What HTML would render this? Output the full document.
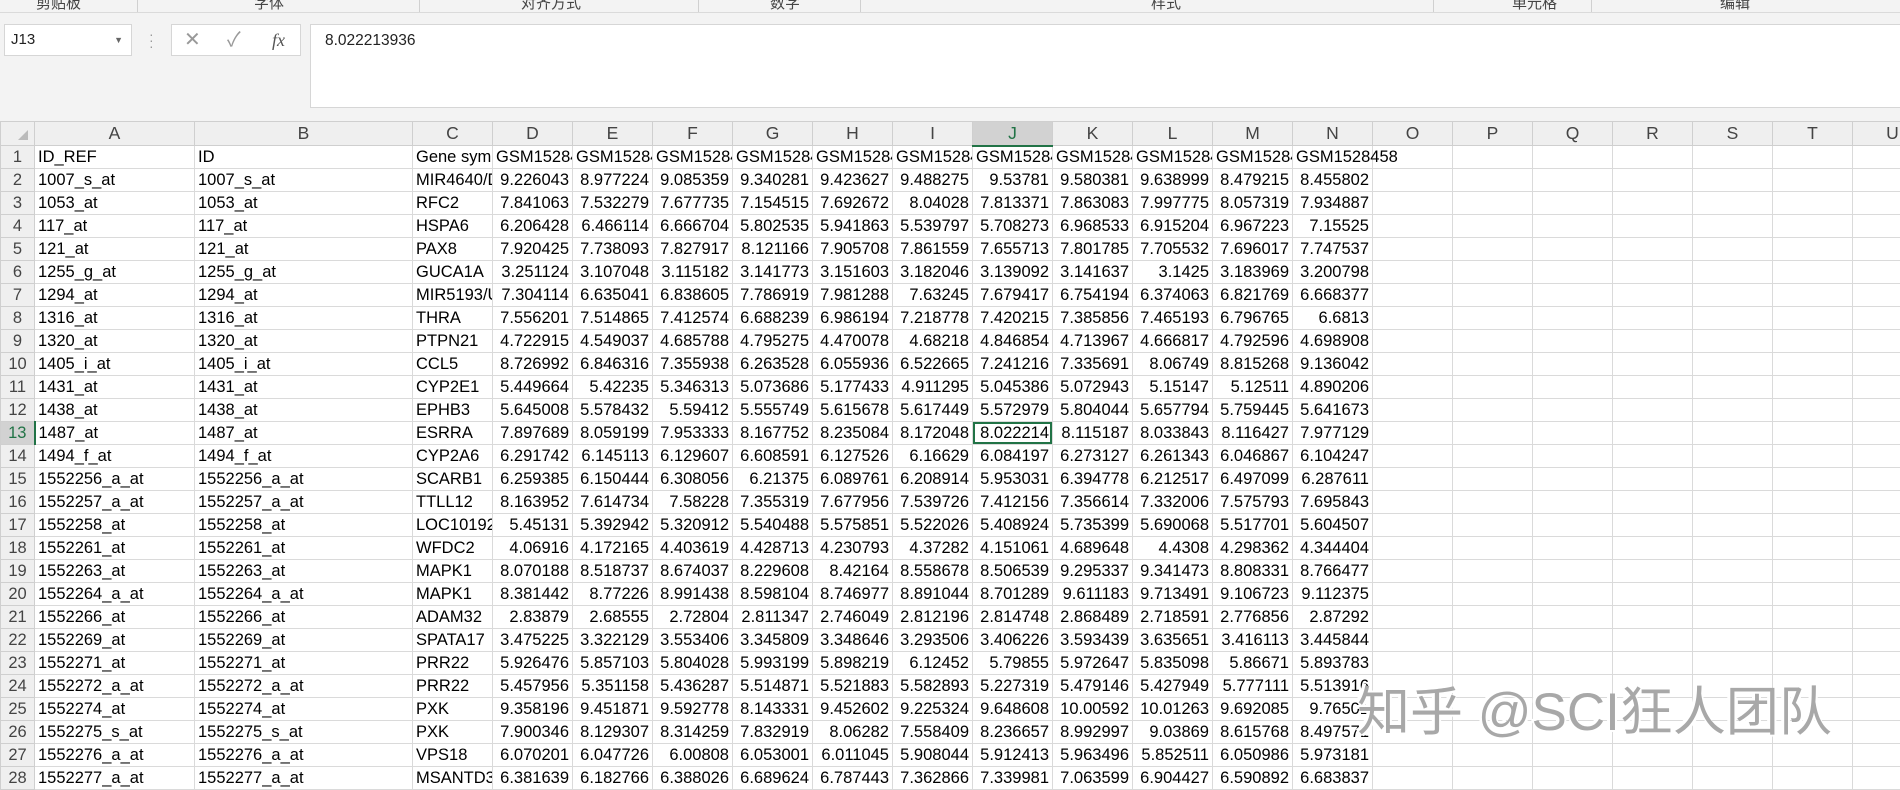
<!DOCTYPE html>
<html><head><meta charset="utf-8"><style>
*{box-sizing:border-box;margin:0;padding:0}
body{width:1900px;height:784px;overflow:hidden;background:#fff;font-family:"Liberation Sans","Noto Sans CJK SC",sans-serif;position:relative}
#rib{position:absolute;left:0;top:0;width:1900px;height:13px;background:#f3f3f3;border-bottom:1px solid #dadada;overflow:hidden}
#rib span{position:absolute;top:-8px;font-size:15px;color:#444}
#rib i{position:absolute;top:0;width:1px;height:12px;background:#d0d0d0}
#fb{position:absolute;left:0;top:13px;width:1900px;height:108px;background:#f3f3f3}
.box{position:absolute;background:#fff;border:1px solid #d6d6d6}
#grid{position:absolute;left:0;top:121px;width:1932px;border-collapse:collapse;table-layout:fixed;font-size:16.5px;color:#000}
#grid td{border:1px solid #dadada;height:23px;white-space:nowrap;overflow:hidden;padding:0 3px;text-align:right;line-height:21px}
#grid td.t{text-align:left}
#grid tr.h td{background:#efefef;color:#444;text-align:center;height:22px;border-color:#cfcfcf;font-size:17.5px}
#grid td.r{background:#efefef;color:#444;text-align:center;border-color:#cfcfcf;padding:0}
#grid td.hs{background:#d2d2d2 !important;border-bottom:2px solid #217346 !important;color:#217346 !important}
#grid td.rs{background:#d2d2d2;border-right:2px solid #217346;color:#217346}
#grid td.sel{box-shadow:inset 0 0 0 2px #217346}
#wm{position:absolute;left:1357px;top:670px;font-size:53px;color:#a8a8a8;text-shadow:-3px -2px 0 #fff,2px 2px 0 #fff;white-space:nowrap;font-family:"Liberation Sans","Noto Sans CJK SC",sans-serif}
</style></head><body>
<div id="rib">
<span style="left:36px">剪贴板</span><span style="left:254px">字体</span><span style="left:521px">对齐方式</span><span style="left:770px">数字</span><span style="left:1151px">样式</span><span style="left:1512px">单元格</span><span style="left:1720px">编辑</span>
<i style="left:137px"></i><i style="left:419px"></i><i style="left:698px"></i><i style="left:860px"></i><i style="left:1433px"></i><i style="left:1591px"></i>
</div>
<div id="fb">
<div class="box" style="left:4px;top:11px;width:128px;height:32px;font-size:15px;line-height:30px;padding-left:6px;color:#222">J13<span style="position:absolute;right:8px;top:0;font-size:9px;color:#666">▼</span></div>
<div style="position:absolute;left:149px;top:18px;color:#999;font-size:14px;line-height:6px">·<br>·<br>·</div>
<div class="box" style="left:171px;top:11px;width:130px;height:32px;color:#999;font-size:20px;line-height:30px">
<span style="position:absolute;left:12px">✕</span><span style="position:absolute;left:55px">✓</span><span style="position:absolute;left:100px;font-family:'Liberation Serif',serif;font-style:italic;color:#555;font-size:18px">fx</span></div>
<div class="box" style="left:310px;top:11px;width:1600px;height:84px;font-size:15.5px;padding:7px 0 0 14px;color:#222">8.022213936</div>
</div>
<table id="grid">
<colgroup><col style="width:34px"><col style="width:160px"><col style="width:218px"><col style="width:80px"><col style="width:80px"><col style="width:80px"><col style="width:80px"><col style="width:80px"><col style="width:80px"><col style="width:80px"><col style="width:80px"><col style="width:80px"><col style="width:80px"><col style="width:80px"><col style="width:80px"><col style="width:80px"><col style="width:80px"><col style="width:80px"><col style="width:80px"><col style="width:80px"><col style="width:80px"><col style="width:80px"></colgroup>
<tr class="h"><td style="background:#efefef"><span style="display:inline-block;width:0;height:0;border-left:10px solid transparent;border-bottom:10px solid #bbb;margin-top:8px;margin-left:10px"></span></td><td>A</td><td>B</td><td>C</td><td>D</td><td>E</td><td>F</td><td>G</td><td>H</td><td>I</td><td class="hs">J</td><td>K</td><td>L</td><td>M</td><td>N</td><td>O</td><td>P</td><td>Q</td><td>R</td><td>S</td><td>T</td><td>U</td></tr>
<tr><td class="r">1</td><td class="t">ID_REF</td><td class="t">ID</td><td class="t">Gene symbol</td><td class="t">GSM1528448</td><td class="t">GSM1528449</td><td class="t">GSM1528450</td><td class="t">GSM1528451</td><td class="t">GSM1528452</td><td class="t">GSM1528453</td><td class="t">GSM1528454</td><td class="t">GSM1528455</td><td class="t">GSM1528456</td><td class="t">GSM1528457</td><td class="t" style="overflow:visible">GSM1528458</td><td></td><td></td><td></td><td></td><td></td><td></td><td></td></tr>
<tr><td class="r">2</td><td class="t">1007_s_at</td><td class="t">1007_s_at</td><td class="t">MIR4640/DDR1</td><td>9.226043</td><td>8.977224</td><td>9.085359</td><td>9.340281</td><td>9.423627</td><td>9.488275</td><td>9.53781</td><td>9.580381</td><td>9.638999</td><td>8.479215</td><td>8.455802</td><td></td><td></td><td></td><td></td><td></td><td></td><td></td></tr>
<tr><td class="r">3</td><td class="t">1053_at</td><td class="t">1053_at</td><td class="t">RFC2</td><td>7.841063</td><td>7.532279</td><td>7.677735</td><td>7.154515</td><td>7.692672</td><td>8.04028</td><td>7.813371</td><td>7.863083</td><td>7.997775</td><td>8.057319</td><td>7.934887</td><td></td><td></td><td></td><td></td><td></td><td></td><td></td></tr>
<tr><td class="r">4</td><td class="t">117_at</td><td class="t">117_at</td><td class="t">HSPA6</td><td>6.206428</td><td>6.466114</td><td>6.666704</td><td>5.802535</td><td>5.941863</td><td>5.539797</td><td>5.708273</td><td>6.968533</td><td>6.915204</td><td>6.967223</td><td>7.15525</td><td></td><td></td><td></td><td></td><td></td><td></td><td></td></tr>
<tr><td class="r">5</td><td class="t">121_at</td><td class="t">121_at</td><td class="t">PAX8</td><td>7.920425</td><td>7.738093</td><td>7.827917</td><td>8.121166</td><td>7.905708</td><td>7.861559</td><td>7.655713</td><td>7.801785</td><td>7.705532</td><td>7.696017</td><td>7.747537</td><td></td><td></td><td></td><td></td><td></td><td></td><td></td></tr>
<tr><td class="r">6</td><td class="t">1255_g_at</td><td class="t">1255_g_at</td><td class="t">GUCA1A</td><td>3.251124</td><td>3.107048</td><td>3.115182</td><td>3.141773</td><td>3.151603</td><td>3.182046</td><td>3.139092</td><td>3.141637</td><td>3.1425</td><td>3.183969</td><td>3.200798</td><td></td><td></td><td></td><td></td><td></td><td></td><td></td></tr>
<tr><td class="r">7</td><td class="t">1294_at</td><td class="t">1294_at</td><td class="t">MIR5193/UBA7</td><td>7.304114</td><td>6.635041</td><td>6.838605</td><td>7.786919</td><td>7.981288</td><td>7.63245</td><td>7.679417</td><td>6.754194</td><td>6.374063</td><td>6.821769</td><td>6.668377</td><td></td><td></td><td></td><td></td><td></td><td></td><td></td></tr>
<tr><td class="r">8</td><td class="t">1316_at</td><td class="t">1316_at</td><td class="t">THRA</td><td>7.556201</td><td>7.514865</td><td>7.412574</td><td>6.688239</td><td>6.986194</td><td>7.218778</td><td>7.420215</td><td>7.385856</td><td>7.465193</td><td>6.796765</td><td>6.6813</td><td></td><td></td><td></td><td></td><td></td><td></td><td></td></tr>
<tr><td class="r">9</td><td class="t">1320_at</td><td class="t">1320_at</td><td class="t">PTPN21</td><td>4.722915</td><td>4.549037</td><td>4.685788</td><td>4.795275</td><td>4.470078</td><td>4.68218</td><td>4.846854</td><td>4.713967</td><td>4.666817</td><td>4.792596</td><td>4.698908</td><td></td><td></td><td></td><td></td><td></td><td></td><td></td></tr>
<tr><td class="r">10</td><td class="t">1405_i_at</td><td class="t">1405_i_at</td><td class="t">CCL5</td><td>8.726992</td><td>6.846316</td><td>7.355938</td><td>6.263528</td><td>6.055936</td><td>6.522665</td><td>7.241216</td><td>7.335691</td><td>8.06749</td><td>8.815268</td><td>9.136042</td><td></td><td></td><td></td><td></td><td></td><td></td><td></td></tr>
<tr><td class="r">11</td><td class="t">1431_at</td><td class="t">1431_at</td><td class="t">CYP2E1</td><td>5.449664</td><td>5.42235</td><td>5.346313</td><td>5.073686</td><td>5.177433</td><td>4.911295</td><td>5.045386</td><td>5.072943</td><td>5.15147</td><td>5.12511</td><td>4.890206</td><td></td><td></td><td></td><td></td><td></td><td></td><td></td></tr>
<tr><td class="r">12</td><td class="t">1438_at</td><td class="t">1438_at</td><td class="t">EPHB3</td><td>5.645008</td><td>5.578432</td><td>5.59412</td><td>5.555749</td><td>5.615678</td><td>5.617449</td><td>5.572979</td><td>5.804044</td><td>5.657794</td><td>5.759445</td><td>5.641673</td><td></td><td></td><td></td><td></td><td></td><td></td><td></td></tr>
<tr><td class="r rs">13</td><td class="t">1487_at</td><td class="t">1487_at</td><td class="t">ESRRA</td><td>7.897689</td><td>8.059199</td><td>7.953333</td><td>8.167752</td><td>8.235084</td><td>8.172048</td><td class="sel">8.022214</td><td>8.115187</td><td>8.033843</td><td>8.116427</td><td>7.977129</td><td></td><td></td><td></td><td></td><td></td><td></td><td></td></tr>
<tr><td class="r">14</td><td class="t">1494_f_at</td><td class="t">1494_f_at</td><td class="t">CYP2A6</td><td>6.291742</td><td>6.145113</td><td>6.129607</td><td>6.608591</td><td>6.127526</td><td>6.16629</td><td>6.084197</td><td>6.273127</td><td>6.261343</td><td>6.046867</td><td>6.104247</td><td></td><td></td><td></td><td></td><td></td><td></td><td></td></tr>
<tr><td class="r">15</td><td class="t">1552256_a_at</td><td class="t">1552256_a_at</td><td class="t">SCARB1</td><td>6.259385</td><td>6.150444</td><td>6.308056</td><td>6.21375</td><td>6.089761</td><td>6.208914</td><td>5.953031</td><td>6.394778</td><td>6.212517</td><td>6.497099</td><td>6.287611</td><td></td><td></td><td></td><td></td><td></td><td></td><td></td></tr>
<tr><td class="r">16</td><td class="t">1552257_a_at</td><td class="t">1552257_a_at</td><td class="t">TTLL12</td><td>8.163952</td><td>7.614734</td><td>7.58228</td><td>7.355319</td><td>7.677956</td><td>7.539726</td><td>7.412156</td><td>7.356614</td><td>7.332006</td><td>7.575793</td><td>7.695843</td><td></td><td></td><td></td><td></td><td></td><td></td><td></td></tr>
<tr><td class="r">17</td><td class="t">1552258_at</td><td class="t">1552258_at</td><td class="t">LOC101927</td><td>5.45131</td><td>5.392942</td><td>5.320912</td><td>5.540488</td><td>5.575851</td><td>5.522026</td><td>5.408924</td><td>5.735399</td><td>5.690068</td><td>5.517701</td><td>5.604507</td><td></td><td></td><td></td><td></td><td></td><td></td><td></td></tr>
<tr><td class="r">18</td><td class="t">1552261_at</td><td class="t">1552261_at</td><td class="t">WFDC2</td><td>4.06916</td><td>4.172165</td><td>4.403619</td><td>4.428713</td><td>4.230793</td><td>4.37282</td><td>4.151061</td><td>4.689648</td><td>4.4308</td><td>4.298362</td><td>4.344404</td><td></td><td></td><td></td><td></td><td></td><td></td><td></td></tr>
<tr><td class="r">19</td><td class="t">1552263_at</td><td class="t">1552263_at</td><td class="t">MAPK1</td><td>8.070188</td><td>8.518737</td><td>8.674037</td><td>8.229608</td><td>8.42164</td><td>8.558678</td><td>8.506539</td><td>9.295337</td><td>9.341473</td><td>8.808331</td><td>8.766477</td><td></td><td></td><td></td><td></td><td></td><td></td><td></td></tr>
<tr><td class="r">20</td><td class="t">1552264_a_at</td><td class="t">1552264_a_at</td><td class="t">MAPK1</td><td>8.381442</td><td>8.77226</td><td>8.991438</td><td>8.598104</td><td>8.746977</td><td>8.891044</td><td>8.701289</td><td>9.611183</td><td>9.713491</td><td>9.106723</td><td>9.112375</td><td></td><td></td><td></td><td></td><td></td><td></td><td></td></tr>
<tr><td class="r">21</td><td class="t">1552266_at</td><td class="t">1552266_at</td><td class="t">ADAM32</td><td>2.83879</td><td>2.68555</td><td>2.72804</td><td>2.811347</td><td>2.746049</td><td>2.812196</td><td>2.814748</td><td>2.868489</td><td>2.718591</td><td>2.776856</td><td>2.87292</td><td></td><td></td><td></td><td></td><td></td><td></td><td></td></tr>
<tr><td class="r">22</td><td class="t">1552269_at</td><td class="t">1552269_at</td><td class="t">SPATA17</td><td>3.475225</td><td>3.322129</td><td>3.553406</td><td>3.345809</td><td>3.348646</td><td>3.293506</td><td>3.406226</td><td>3.593439</td><td>3.635651</td><td>3.416113</td><td>3.445844</td><td></td><td></td><td></td><td></td><td></td><td></td><td></td></tr>
<tr><td class="r">23</td><td class="t">1552271_at</td><td class="t">1552271_at</td><td class="t">PRR22</td><td>5.926476</td><td>5.857103</td><td>5.804028</td><td>5.993199</td><td>5.898219</td><td>6.12452</td><td>5.79855</td><td>5.972647</td><td>5.835098</td><td>5.86671</td><td>5.893783</td><td></td><td></td><td></td><td></td><td></td><td></td><td></td></tr>
<tr><td class="r">24</td><td class="t">1552272_a_at</td><td class="t">1552272_a_at</td><td class="t">PRR22</td><td>5.457956</td><td>5.351158</td><td>5.436287</td><td>5.514871</td><td>5.521883</td><td>5.582893</td><td>5.227319</td><td>5.479146</td><td>5.427949</td><td>5.777111</td><td>5.513916</td><td></td><td></td><td></td><td></td><td></td><td></td><td></td></tr>
<tr><td class="r">25</td><td class="t">1552274_at</td><td class="t">1552274_at</td><td class="t">PXK</td><td>9.358196</td><td>9.451871</td><td>9.592778</td><td>8.143331</td><td>9.452602</td><td>9.225324</td><td>9.648608</td><td>10.00592</td><td>10.01263</td><td>9.692085</td><td>9.76501</td><td></td><td></td><td></td><td></td><td></td><td></td><td></td></tr>
<tr><td class="r">26</td><td class="t">1552275_s_at</td><td class="t">1552275_s_at</td><td class="t">PXK</td><td>7.900346</td><td>8.129307</td><td>8.314259</td><td>7.832919</td><td>8.06282</td><td>7.558409</td><td>8.236657</td><td>8.992997</td><td>9.03869</td><td>8.615768</td><td>8.497571</td><td></td><td></td><td></td><td></td><td></td><td></td><td></td></tr>
<tr><td class="r">27</td><td class="t">1552276_a_at</td><td class="t">1552276_a_at</td><td class="t">VPS18</td><td>6.070201</td><td>6.047726</td><td>6.00808</td><td>6.053001</td><td>6.011045</td><td>5.908044</td><td>5.912413</td><td>5.963496</td><td>5.852511</td><td>6.050986</td><td>5.973181</td><td></td><td></td><td></td><td></td><td></td><td></td><td></td></tr>
<tr><td class="r">28</td><td class="t">1552277_a_at</td><td class="t">1552277_a_at</td><td class="t">MSANTD3</td><td>6.381639</td><td>6.182766</td><td>6.388026</td><td>6.689624</td><td>6.787443</td><td>7.362866</td><td>7.339981</td><td>7.063599</td><td>6.904427</td><td>6.590892</td><td>6.683837</td><td></td><td></td><td></td><td></td><td></td><td></td><td></td></tr>
</table>
<div id="wm">知乎 @SCI狂人团队</div>
</body></html>
